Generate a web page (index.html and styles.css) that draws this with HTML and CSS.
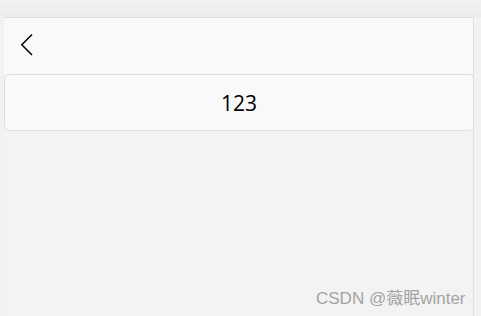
FILE: index.html
```html
<!DOCTYPE html>
<html>
<head>
<meta charset="utf-8">
<link rel="stylesheet" href="styles.css">
</head>
<body>
<div class="top-shade"></div>
<div class="window">
  <div class="header">
    <svg class="back" width="14" height="24" viewBox="0 0 14 24"><path d="M12 1.5 L1.8 11.8 L12 22" fill="none" stroke="#000" stroke-width="1.5"/></svg>
  </div>
  <div class="card">123</div>
  <div class="body"></div>
</div>
<div class="watermark">CSDN @薇眠winter</div>
</body>
</html>
```
FILE: styles.css
```css
html, body {
  margin: 0;
  padding: 0;
  height: 316px;
  overflow: hidden;
  background: #f2f2f2;
  font-family: "Open Sans", "Noto Sans", "Noto Sans CJK SC", sans-serif;
}
.top-shade {
  height: 17px;
  background: linear-gradient(#f2f2f2, #ececec);
}
.window {
  margin-left: 4px;
  width: 469px;
  height: 299px;
  border-top: 1px solid #dcdcdc;
  border-right: 1px solid #e0e0e0;
  background: #f3f3f3;
  display: flex;
  flex-direction: column;
}
.header {
  height: 56px;
  background: #f9f9f9;
  display: flex;
  align-items: center;
  padding-left: 16px;
}
.back {
  display: block;
  margin-top: -2px;
}
.card {
  height: 55px;
  border: 1px solid #dedede;
  border-radius: 5px;
  background: #f9f9f9;
  display: flex;
  align-items: center;
  justify-content: center;
  font-size: 21px;
  color: #000;
  margin-right: -1px;
}
.body {
  flex: 1;
}
.watermark {
  position: absolute;
  left: 316px;
  top: 290px;
  line-height: 1;
  font-family: "Liberation Sans", "Noto Sans CJK SC", sans-serif;
  font-size: 17px;
  color: #a3a3a3;
}
```
